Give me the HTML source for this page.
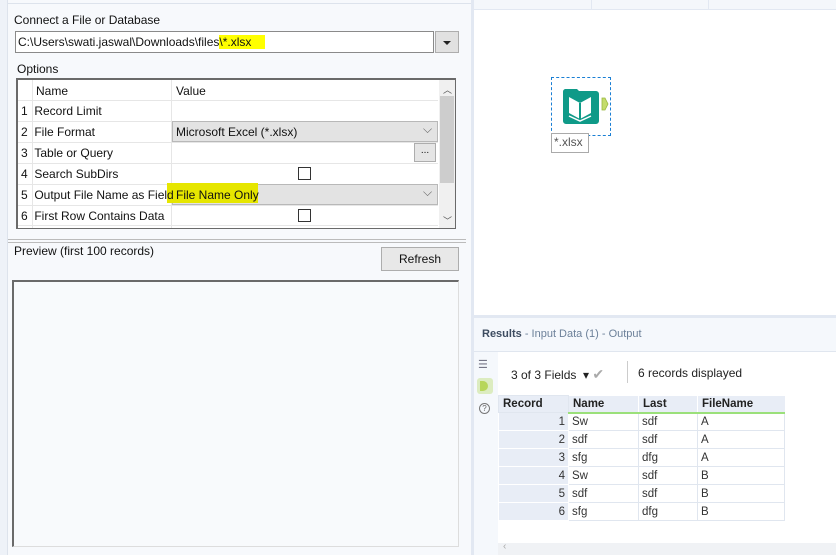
<!DOCTYPE html>
<html><head><style>
*{box-sizing:border-box;margin:0;padding:0}
body{width:836px;height:555px;overflow:hidden;background:#fff;font-family:"Liberation Sans",sans-serif;font-size:12px;color:#111;position:relative}
.a{position:absolute}
.t{font-size:12px;white-space:nowrap}
</style></head><body>
<div class="a" style="left:0;top:0;width:8px;height:555px;background:#eef2f8;border-right:1px solid #dde3ec"></div>
<div class="a" style="left:8px;top:0;width:463px;height:555px;background:#f7f9fc"></div>
<div class="a" style="left:8px;top:0;width:463px;height:4px;border-bottom:1px solid #dde3ec"></div>
<div class="a t" style="left:14px;top:13px">Connect a File or Database</div>
<div class="a" style="left:15px;top:31px;width:419px;height:22px;background:#fff;border:1px solid #8a8a8a"></div>
<div class="a t" style="left:18px;top:35px">C:\Users\swati.jaswal\Downloads\files<span style="background:#ffff00;padding-right:14px">\*.xlsx</span></div>
<div class="a" style="left:435px;top:31px;width:24px;height:22px;background:#e1e1e1;border:1px solid #adadad"></div>
<div class="a" style="left:443px;top:41px;width:0;height:0;border-left:4px solid transparent;border-right:4px solid transparent;border-top:4px solid #222"></div>
<div class="a t" style="left:17px;top:62px">Options</div>
<div class="a" style="left:16px;top:78px;width:440px;height:151px;background:#fff;border:1px solid #6a6a6a;border-width:2px 1px 1px 2px"></div>
<div class="a" style="left:32px;top:80px;width:1px;height:148px;background:#e6e6e6"></div>
<div class="a" style="left:171px;top:80px;width:1px;height:148px;background:#e6e6e6"></div>
<div class="a t" style="left:36px;top:84px">Name</div>
<div class="a t" style="left:176px;top:84px">Value</div>
<div class="a" style="left:18px;top:100px;width:420px;height:126px">
<div style="height:21px;border-top:1px solid #e6e6e6"></div>
<div style="height:21px;border-top:1px solid #e6e6e6"></div>
<div style="height:21px;border-top:1px solid #e6e6e6"></div>
<div style="height:21px;border-top:1px solid #e6e6e6"></div>
<div style="height:21px;border-top:1px solid #e6e6e6"></div>
<div style="height:21px;border-top:1px solid #e6e6e6;border-bottom:1px solid #e6e6e6"></div>
</div>
<div class="a" style="left:172px;top:121px;width:266px;height:21px;background:#e3e3e3;border:1px solid #b8b8b8"></div>
<div class="a" style="left:172px;top:184px;width:266px;height:21px;background:#e3e3e3;border:1px solid #b8b8b8"></div>
<div class="a" style="left:167px;top:183px;width:91px;height:20px;background:#e6e600"></div>
<div class="a t" style="left:21px;top:104px">1&nbsp;&nbsp;Record Limit</div>
<div class="a t" style="left:21px;top:125px">2&nbsp;&nbsp;File Format</div>
<div class="a t" style="left:21px;top:146px">3&nbsp;&nbsp;Table or Query</div>
<div class="a t" style="left:21px;top:167px">4&nbsp;&nbsp;Search SubDirs</div>
<div class="a t" style="left:21px;top:188px">5&nbsp;&nbsp;Output File Name as Field</div>
<div class="a t" style="left:21px;top:209px">6&nbsp;&nbsp;First Row Contains Data</div>
<div class="a t" style="left:176px;top:125px">Microsoft Excel (*.xlsx)</div>
<div class="a t" style="left:423px;top:122px;color:#666">⌵</div>
<div class="a" style="left:414px;top:143px;width:22px;height:19px;background:#e5e5e5;border:1px solid #adadad;font-size:10px;text-align:center;line-height:14px">...</div>
<div class="a" style="left:298px;top:167px;width:13px;height:13px;border:1px solid #333;background:#fff"></div>
<div class="a t" style="left:176px;top:188px">File Name Only</div>
<div class="a t" style="left:423px;top:185px;color:#666">⌵</div>
<div class="a" style="left:298px;top:209px;width:13px;height:13px;border:1px solid #333;background:#fff"></div>
<div class="a" style="left:439px;top:80px;width:16px;height:148px;background:#f0f0f0"></div>
<div class="a" style="left:440px;top:96px;width:14px;height:87px;background:#cdcdcd"></div>
<div class="a" style="left:443px;top:83px;font-size:9px;color:#555">︿</div>
<div class="a" style="left:443px;top:214px;font-size:9px;color:#555">﹀</div>
<div class="a" style="left:8px;top:239px;width:458px;height:4px;border-top:1px solid #bbb;border-bottom:1px solid #bbb"></div>
<div class="a t" style="left:14px;top:244px">Preview (first 100 records)</div>
<div class="a" style="left:381px;top:247px;width:78px;height:24px;background:#e8e8e8;border:1px solid #adadad;text-align:center;line-height:22px;font-size:12px">Refresh</div>
<div class="a" style="left:12px;top:280px;width:447px;height:267px;background:#f8fafc;border:1px solid #ddd;border-top:2px solid #6a6a6a;border-left:2px solid #6a6a6a"></div>
<div class="a" style="left:471px;top:0;width:3px;height:555px;background:#e2e8f2"></div>
<div class="a" style="left:474px;top:0;width:362px;height:10px;background:#f4f7fb;border-bottom:1px solid #e2e8f2"></div>
<div class="a" style="left:591px;top:0;width:1px;height:10px;background:#e2e8f2"></div>
<div class="a" style="left:708px;top:0;width:1px;height:10px;background:#e2e8f2"></div>
<div class="a" style="left:551px;top:77px;width:60px;height:59px;border:1px dashed #1a7fd4"></div>
<svg class="a" style="left:562px;top:88px" width="48" height="38" viewBox="0 0 48 38">
<path d="M3 1h12l2 2h17a3 3 0 0 1 3 3v27a3 3 0 0 1-3 3H4a3 3 0 0 1-3-3V4a3 3 0 0 1 2-3z" fill="#0f9a88"/>
<path d="M7 9l11 6 11-6v16l-11 6-11-6z" fill="#fff"/>
<path d="M18 15v16" stroke="#0f9a88" stroke-width="2"/>
<path d="M7 28l11 5 11-5" stroke="#fff" stroke-width="1.5" fill="none"/>
<path d="M40 10h3l3 6-3 6h-3z" fill="#c4dc6a" stroke="#9ab840" stroke-width=".8"/>
</svg>
<div class="a" style="left:551px;top:133px;width:38px;height:20px;background:#fff;border:1px solid #aaa;font-size:12px;color:#555;padding:1px 2px">*.xlsx</div>
<div class="a" style="left:474px;top:315px;width:362px;height:240px;background:#f5f8fc;border-top:3px solid #e2e8f2"></div>
<div class="a" style="left:482px;top:328px;font-size:11px;color:#4a5a70"><b style="color:#3d4c60">Results</b> <span style="color:#6c8099">- Input Data (1) - Output</span></div>
<div class="a" style="left:474px;top:351px;width:362px;height:1px;background:#e0e6ef"></div>
<div class="a" style="left:498px;top:352px;width:338px;height:203px;background:#fff"></div>
<div class="a" style="left:478px;top:358px;font-size:11px;color:#778">☰</div>
<div class="a" style="left:477px;top:378px;width:16px;height:16px;background:#dcecc0;border-radius:3px"></div>
<div class="a" style="left:480px;top:381px;width:8px;height:10px;background:#b7d65a;border-radius:0 5px 5px 0"></div>
<div class="a" style="left:479px;top:403px;width:11px;height:11px;border:1px solid #777;border-radius:50%;font-size:8px;text-align:center;line-height:9px;color:#666">?</div>
<div class="a" style="left:511px;top:366px;font-size:12px;color:#222">3 of 3 Fields &nbsp;▾ <span style="color:#aaa;font-size:14px">✔</span></div>
<div class="a" style="left:627px;top:361px;width:1px;height:22px;background:#ccc"></div>
<div class="a" style="left:638px;top:366px;font-size:12px;color:#222">6 records displayed</div>
<table class="a" style="left:498px;top:395px;border-collapse:collapse;font-size:11.5px;color:#333">
<tr style="height:17px;background:#e8edf6;font-weight:bold;color:#222">
<td style="width:70px;padding-left:4px;border:1px solid #e0e6ef">Record</td>
<td style="width:70px;padding-left:4px;border-bottom:2px solid #9be07a;border-right:1px solid #fff">Name</td>
<td style="width:59px;padding-left:4px;border-bottom:2px solid #9be07a;border-right:1px solid #fff">Last</td>
<td style="width:87px;padding-left:4px;border-bottom:2px solid #9be07a">FileName</td></tr>
<tr style="height:18px"><td style="background:#e8edf6;text-align:right;padding-right:3px;border:1px solid #fff">1</td><td style="padding-left:3px;border:1px solid #e0e6ef">Sw</td><td style="padding-left:3px;border:1px solid #e0e6ef">sdf</td><td style="padding-left:3px;border:1px solid #e0e6ef">A</td></tr>
<tr style="height:18px"><td style="background:#e8edf6;text-align:right;padding-right:3px;border:1px solid #fff">2</td><td style="padding-left:3px;border:1px solid #e0e6ef">sdf</td><td style="padding-left:3px;border:1px solid #e0e6ef">sdf</td><td style="padding-left:3px;border:1px solid #e0e6ef">A</td></tr>
<tr style="height:18px"><td style="background:#e8edf6;text-align:right;padding-right:3px;border:1px solid #fff">3</td><td style="padding-left:3px;border:1px solid #e0e6ef">sfg</td><td style="padding-left:3px;border:1px solid #e0e6ef">dfg</td><td style="padding-left:3px;border:1px solid #e0e6ef">A</td></tr>
<tr style="height:18px"><td style="background:#e8edf6;text-align:right;padding-right:3px;border:1px solid #fff">4</td><td style="padding-left:3px;border:1px solid #e0e6ef">Sw</td><td style="padding-left:3px;border:1px solid #e0e6ef">sdf</td><td style="padding-left:3px;border:1px solid #e0e6ef">B</td></tr>
<tr style="height:18px"><td style="background:#e8edf6;text-align:right;padding-right:3px;border:1px solid #fff">5</td><td style="padding-left:3px;border:1px solid #e0e6ef">sdf</td><td style="padding-left:3px;border:1px solid #e0e6ef">sdf</td><td style="padding-left:3px;border:1px solid #e0e6ef">B</td></tr>
<tr style="height:18px"><td style="background:#e8edf6;text-align:right;padding-right:3px;border:1px solid #fff">6</td><td style="padding-left:3px;border:1px solid #e0e6ef">sfg</td><td style="padding-left:3px;border:1px solid #e0e6ef">dfg</td><td style="padding-left:3px;border:1px solid #e0e6ef">B</td></tr>
</table>
<div class="a" style="left:498px;top:543px;width:338px;height:12px;background:#f0f2f5"></div>
<div class="a" style="left:503px;top:541px;font-size:10px;color:#aaa">‹</div>
</body></html>
